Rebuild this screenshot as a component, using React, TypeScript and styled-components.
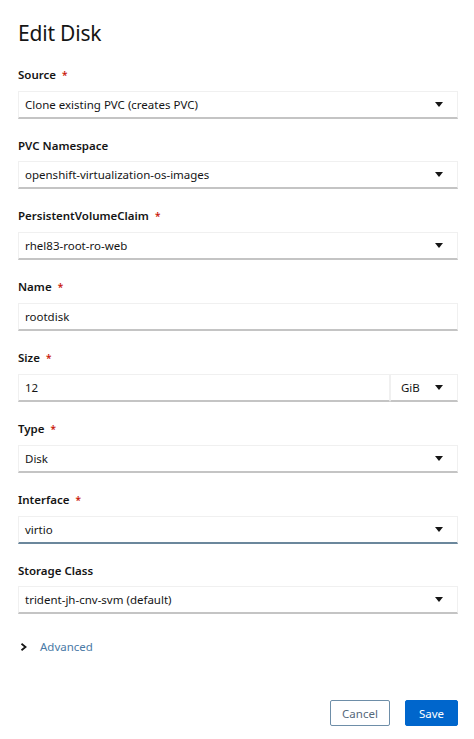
import React from 'react';
import styled, { createGlobalStyle } from 'styled-components';

const GlobalStyle = createGlobalStyle`
  html, body {
    margin: 0;
    padding: 0;
    background: #ffffff;
  }
  body {
    font-family: "Noto Sans", "Open Sans", "Liberation Sans", sans-serif;
    color: #151515;
  }
`;

// Layout
const Page = styled.div`
  width: 474px;
  height: 739px;
  box-sizing: border-box;
  padding: 19px 16px 0 18px;
  display: flex;
  flex-direction: column;
`;

const Title = styled.h1`
  margin: 0 0 20px;
  font-size: 21px;
  font-weight: 400;
  line-height: 28px;
  letter-spacing: -0.2px;
`;

const Form = styled.div`
  display: flex;
  flex-direction: column;
  gap: 19px;
`;

const Group = styled.div`
  display: flex;
  flex-direction: column;
`;

const Label = styled.label`
  font-size: 11.5px;
  font-weight: 600;
  line-height: 15px;
  margin-bottom: 8px;
`;

const Required = styled.span`
  color: #c9190b;
  margin-left: 6px;
  font-size: 10px;
`;

// Inputs
const Field = styled.div<{ $focused?: boolean; $grow?: boolean; $width?: number }>`
  box-sizing: border-box;
  height: 28px;
  display: flex;
  align-items: center;
  padding: 0 14px 0 6px;
  border: 1px solid #f0f0f0;
  border-bottom: 2px solid ${p => (p.$focused ? '#6b879c' : '#c4c4c4')};
  font-size: 11.5px;
  color: #151515;
  background: #fff;
  ${p => (p.$grow ? 'flex: 1;' : '')}
  ${p => (p.$width ? `width: ${p.$width}px; flex: none;` : '')}
`;

const Value = styled.span`
  flex: 1;
  white-space: nowrap;
`;

const Caret = styled.span`
  width: 0;
  height: 0;
  border-left: 4px solid transparent;
  border-right: 4px solid transparent;
  border-top: 5px solid #151515;
`;

const InputRow = styled.div`
  display: flex;
`;

// Footer
const Expander = styled.div`
  display: flex;
  align-items: center;
  margin-top: 25px;
  padding-left: 2px;
  gap: 13px;
  font-size: 11.5px;
  color: #4a7aa6;
`;

const Actions = styled.div`
  display: flex;
  justify-content: flex-end;
  gap: 15px;
  margin-top: 46px;
  padding-right: 0;
`;

const Button = styled.button<{ $primary?: boolean }>`
  box-sizing: border-box;
  height: 26px;
  padding: 0 ${p => (p.$primary ? '13px' : '11px')};
  border-radius: 2px;
  font-family: inherit;
  font-size: 11.5px;
  cursor: pointer;
  border: 1px solid ${p => (p.$primary ? '#0066cc' : '#6e8ea8')};
  background: ${p => (p.$primary ? '#0066cc' : '#ffffff')};
  color: ${p => (p.$primary ? '#ffffff' : '#56697a')};
`;

const Chevron = () => (
  <svg width="7" height="8" viewBox="0 0 7 8">
    <path d="M1.5 0.8 L5.5 4 L1.5 7.2" fill="none" stroke="#151515" strokeWidth="1.8" />
  </svg>
);

type SelectProps = { value: string; focused?: boolean };

const Select = ({ value, focused }: SelectProps) => (
  <Field $focused={focused}>
    <Value>{value}</Value>
    <Caret />
  </Field>
);

const FormLabel = ({ text, required }: { text: string; required?: boolean }) => (
  <Label>
    {text}
    {required && <Required>*</Required>}
  </Label>
);

const App: React.FC = () => (
  <>
    <GlobalStyle />
    <Page>
      <Title>Edit Disk</Title>
      <Form>
        <Group>
          <FormLabel text="Source" required />
          <Select value="Clone existing PVC (creates PVC)" />
        </Group>
        <Group>
          <FormLabel text="PVC Namespace" />
          <Select value="openshift-virtualization-os-images" />
        </Group>
        <Group>
          <FormLabel text="PersistentVolumeClaim" required />
          <Select value="rhel83-root-ro-web" />
        </Group>
        <Group>
          <FormLabel text="Name" required />
          <Field>
            <Value>rootdisk</Value>
          </Field>
        </Group>
        <Group>
          <FormLabel text="Size" required />
          <InputRow>
            <Field $grow>
              <Value>12</Value>
            </Field>
            <Field $width={68} style={{ paddingLeft: 10 }}>
              <Value>GiB</Value>
              <Caret />
            </Field>
          </InputRow>
        </Group>
        <Group>
          <FormLabel text="Type" required />
          <Select value="Disk" />
        </Group>
        <Group>
          <FormLabel text="Interface" required />
          <Select value="virtio" focused />
        </Group>
        <Group>
          <FormLabel text="Storage Class" />
          <Select value="trident-jh-cnv-svm (default)" />
        </Group>
      </Form>
      <Expander>
        <Chevron />
        <span>Advanced</span>
      </Expander>
      <Actions>
        <Button>Cancel</Button>
        <Button $primary>Save</Button>
      </Actions>
    </Page>
  </>
);

export default App;
